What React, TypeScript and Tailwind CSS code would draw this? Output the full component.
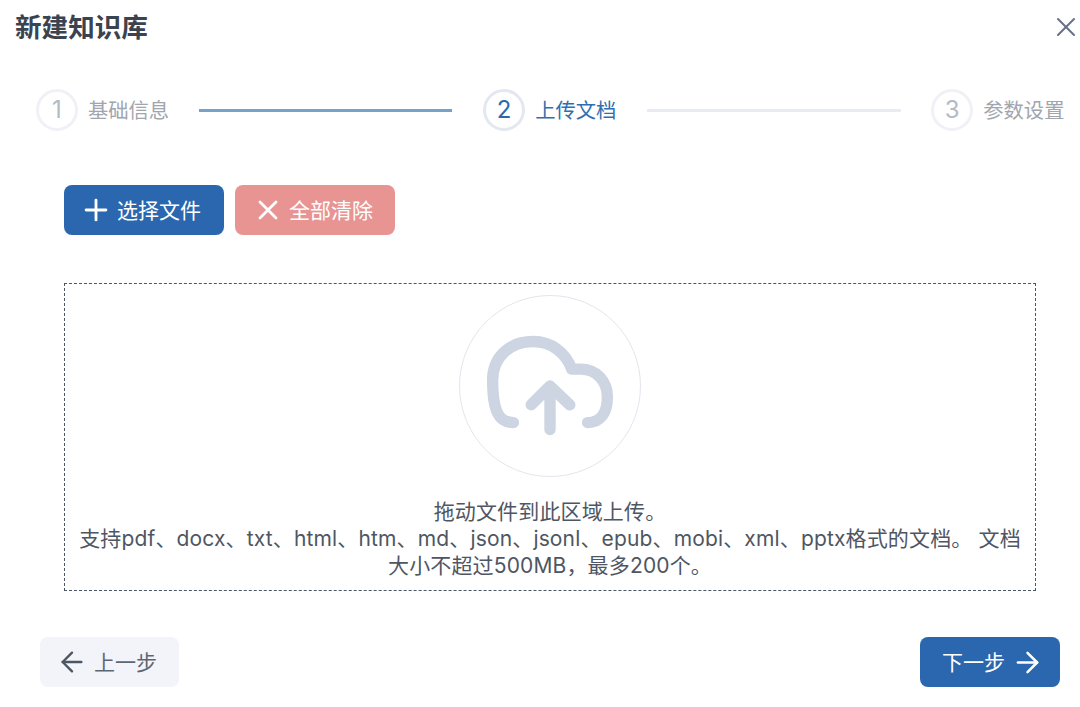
import { ArrowLeft, ArrowRight, Plus, X } from "lucide-react";

const fontStack = "font-['Inter','Noto_Sans_CJK_SC',sans-serif]";

function Step({ num, label, active }: { num: number; label: string; active?: boolean }) {
  return (
    <div className="flex shrink-0 items-center gap-[10px]">
      <div
        className={`flex h-[42px] w-[42px] items-center justify-center rounded-full border-[3px] text-[24px] ${
          active ? "border-[#e3e8f0] text-[#2b67ae]" : "border-[#eff1f6] text-[#b4bac4]"
        }`}
      >
        {num}
      </div>
      <span className={`pt-[2px] text-[20.3px] leading-[28px] ${active ? "text-[#2f6fb0]" : "text-[#a0a5ae]"}`}>{label}</span>
    </div>
  );
}

function CloudUpload() {
  return (
    <svg width="182" height="182" viewBox="0 0 182 182" fill="none" stroke="#cdd5e2" strokeWidth="11.5" strokeLinecap="round" strokeLinejoin="round">
      <path d="M54 128C40 128 33 118 33 85C33 62 50 46 74 46C92 46 107 57 113 74L122 74C138 74 149 86 149 102C149 118 142 128 129 128" />
      <path d="M91 135V91M72 110L91 91L111 110" />
    </svg>
  );
}

export default function App() {
  return (
    <div className={`flex h-[707px] w-[1080px] flex-col overflow-hidden bg-white ${fontStack}`}>
      <header className="flex h-[56px] items-center justify-between pb-[2px] pl-[15px]">
        <h1 className="text-[26.6px] leading-[36px] font-bold text-[#3c4350]">新建知识库</h1>
        <X size={32} strokeWidth={1.5} className="mr-[-2px] text-[#667085]" />
      </header>

      <div className="mt-[33px] flex h-[42px] items-center pl-[36px]">
        <Step num={1} label="基础信息" />
        <div className="mr-[31px] ml-[30px] h-[3px] w-[253px] bg-[#76a1c9]" />
        <Step num={2} label="上传文档" active />
        <div className="mr-[30px] ml-[31px] h-[3px] w-[254px] bg-[#e8ebf3]" />
        <Step num={3} label="参数设置" />
      </div>

      <div className="mt-[54px] flex gap-[11px] pl-[64px]">
        <button className="flex h-[50px] w-[160px] items-center gap-[4px] rounded-[8px] bg-[#2b67ae] pl-[15px] text-[21px] text-white">
          <Plus size={34} strokeWidth={2} />
          <span className="pt-[2px]">选择文件</span>
        </button>
        <button className="flex h-[50px] w-[160px] items-center gap-[5px] rounded-[8px] bg-[#e89493] pl-[17px] text-[21px] text-white">
          <X size={32} strokeWidth={2.1} />
          <span className="pt-[2px]">全部清除</span>
        </button>
      </div>

      <div className="mt-[48px] mr-[44px] ml-[64px] flex h-[308px] flex-col items-center border border-dashed border-[#4b5563] px-[10px] pt-[11px]">
        <div className="flex h-[182px] w-[182px] shrink-0 items-center justify-center rounded-full border border-[#e2e6ed]">
          <CloudUpload />
        </div>
        <p className="mt-[21px] text-center text-[21px] leading-[27px] tracking-[0.15px] text-[#4e5663]">
          拖动文件到此区域上传。
          <br />
          支持pdf、docx、txt、html、htm、md、json、jsonl、epub、mobi、xml、pptx格式的文档。 文档大小不超过500MB，最多200个。
        </p>
      </div>

      <div className="mt-[46px] flex justify-between pl-[40px] pr-[20px]">
        <button className="flex h-[50px] w-[139px] items-center gap-[6px] rounded-[8px] bg-[#f2f4f9] pl-[16px] text-[21px] text-[#5f6673]">
          <ArrowLeft size={32} strokeWidth={1.8} className="text-[#4e5663]" />
          <span className="pt-[2px]">上一步</span>
        </button>
        <button className="flex h-[50px] w-[140px] items-center gap-[6px] rounded-[8px] bg-[#2b67ae] pl-[22px] text-[21px] text-white">
          <span className="pt-[2px]">下一步</span>
          <ArrowRight size={33} strokeWidth={1.8} />
        </button>
      </div>
    </div>
  );
}
